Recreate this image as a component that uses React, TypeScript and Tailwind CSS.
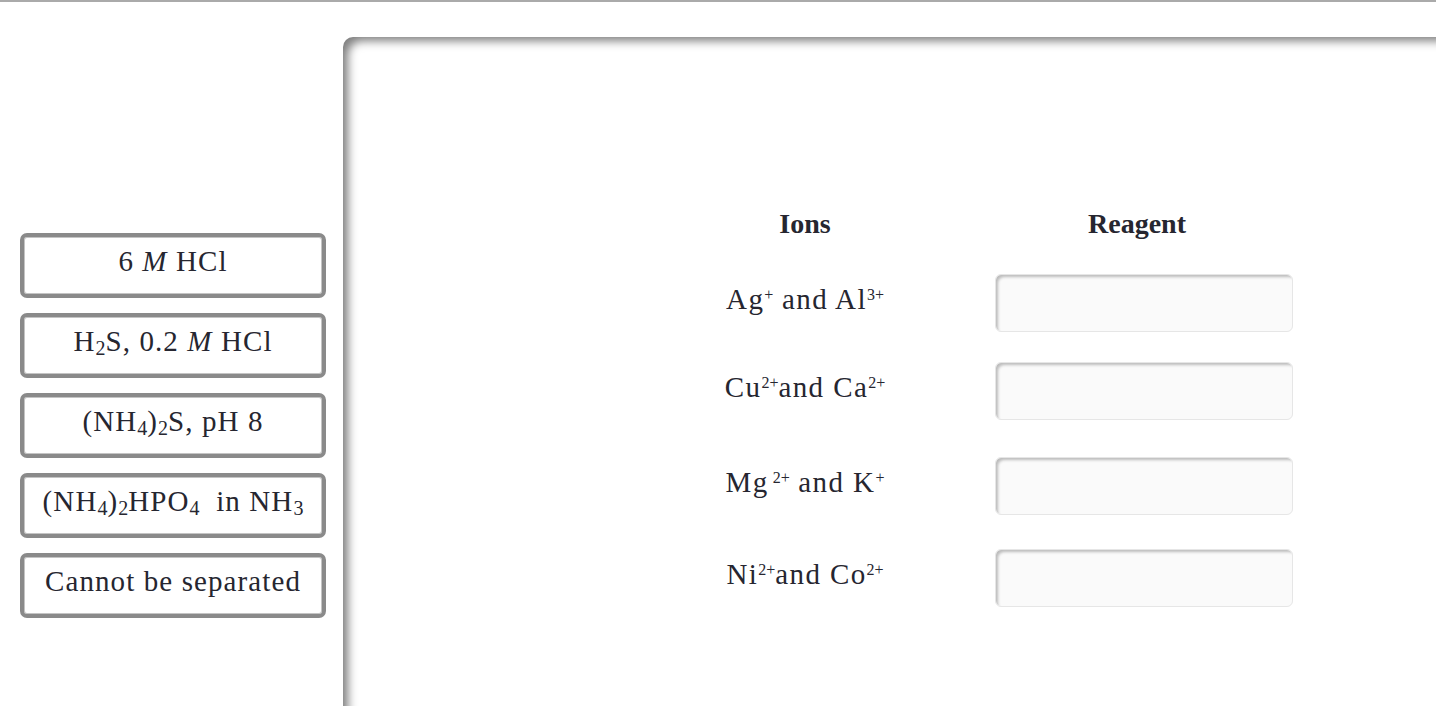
import type { ReactNode } from 'react'

const Sup = ({ children }: { children: ReactNode }) => (
  <sup className="text-[16px] top-[-0.55em] tracking-normal">{children}</sup>
)
const Sub = ({ children }: { children: ReactNode }) => (
  <sub className="text-[20px] bottom-[-0.2em] tracking-normal">{children}</sub>
)

const choices: ReactNode[] = [
  <>6 <i>M</i> HCl</>,
  <>H<Sub>2</Sub>S, 0.2 <i>M</i> HCl</>,
  <>(NH<Sub>4</Sub>)<Sub>2</Sub>S, pH 8</>,
  <>(NH<Sub>4</Sub>)<Sub>2</Sub>HPO<Sub>4</Sub>&nbsp; in NH<Sub>3</Sub></>,
  <>Cannot be separated</>,
]

const rows = [
  { ions: <>Ag<Sup>+</Sup> and Al<Sup>3+</Sup></>, mt: 'mt-[35px]' },
  { ions: <>Cu<Sup>2+</Sup>and Ca<Sup>2+</Sup></>, mt: 'mt-[30px]' },
  { ions: <>Mg<Sup> 2+</Sup> and K<Sup>+</Sup></>, mt: 'mt-[37px]' },
  { ions: <>Ni<Sup>2+</Sup>and Co<Sup>2+</Sup></>, mt: 'mt-[34px]' },
]

export default function App() {
  return (
    <div className="h-[706px] overflow-hidden bg-white border-t-2 border-[#aaaaaa] text-[#262630] font-['Liberation_Serif',serif]">
      <div className="flex h-full">
        {/* Answer choices */}
        <div className="w-[343px] shrink-0 pl-[20px] pr-[17px] pt-[231px] flex flex-col gap-[15px]">
          {choices.map((c, i) => (
            <div
              key={i}
              className="h-[65px] rounded-[7px] border-[4px] border-[#8a8a8a] shadow-[inset_0_0_0_1px_#c4c4c4] bg-white flex items-center justify-center text-[29px] tracking-[1.1px] whitespace-nowrap"
            >
              <span className="-mt-[8px]">{c}</span>
            </div>
          ))}
        </div>

        {/* Drop panel */}
        <div className="flex-1 mt-[35px] rounded-tl-[10px] shadow-[inset_9px_8px_10px_-4px_rgba(0,0,0,0.5)] pl-[357px] pt-[172px]">
          <div className="flex">
            <div className="w-[210px] text-center text-[28px] font-bold leading-[30px]">Ions</div>
            <div className="ml-[85px] w-[298px] pr-[14px] text-center text-[28px] font-bold leading-[30px]">Reagent</div>
          </div>
          {rows.map((r, i) => (
            <div key={i} className={`flex items-center ${r.mt}`}>
              <div className="w-[210px] text-center text-[29px] tracking-[1.4px] whitespace-nowrap -mt-[6px]">{r.ions}</div>
              <div className="ml-[85px] w-[298px] h-[58px] rounded-[6px] bg-[#fafafa] border border-[#e6e6e6] shadow-[inset_3px_3px_3px_-1px_rgba(0,0,0,0.25)]" />
            </div>
          ))}
        </div>
      </div>
    </div>
  )
}
